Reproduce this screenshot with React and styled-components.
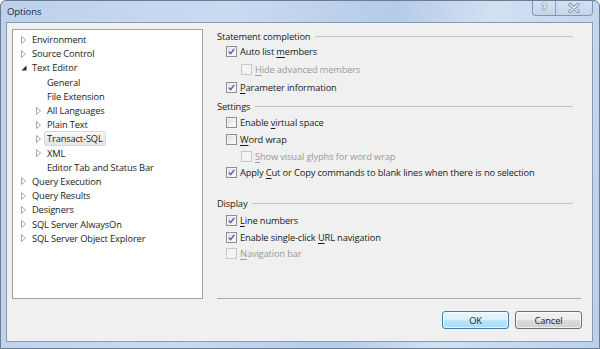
import React from 'react';
import styled, { createGlobalStyle } from 'styled-components';

const GlobalStyle = createGlobalStyle`
  html, body {
    margin: 0;
    padding: 0;
    background: #ffffff;
  }
  body {
    font-family: "Open Sans", "Noto Sans", sans-serif;
    font-size: 9.3px;
    letter-spacing: -0.14px;
    color: #1b1b1b;
  }
`;

const tree = [
  { label: 'Environment', level: 0, arrow: 'closed' },
  { label: 'Source Control', level: 0, arrow: 'closed' },
  { label: 'Text Editor', level: 0, arrow: 'open' },
  { label: 'General', level: 1 },
  { label: 'File Extension', level: 1 },
  { label: 'All Languages', level: 1, arrow: 'closed' },
  { label: 'Plain Text', level: 1, arrow: 'closed' },
  { label: 'Transact-SQL', level: 1, arrow: 'closed', selected: true },
  { label: 'XML', level: 1, arrow: 'closed' },
  { label: 'Editor Tab and Status Bar', level: 1 },
  { label: 'Query Execution', level: 0, arrow: 'closed' },
  { label: 'Query Results', level: 0, arrow: 'closed' },
  { label: 'Designers', level: 0, arrow: 'closed' },
  { label: 'SQL Server AlwaysOn', level: 0, arrow: 'closed' },
  { label: 'SQL Server Object Explorer', level: 0, arrow: 'closed' },
];

// label split into [before, mnemonic, after]
const sections = [
  {
    title: 'Statement completion',
    items: [
      { text: ['Auto list ', 'm', 'embers'], checked: true },
      { text: ['', 'H', 'ide advanced members'], disabled: true, indent: true, mt: 1 },
      { text: ['', 'P', 'arameter information'], checked: true, mt: 1 },
    ],
  },
  {
    title: 'Settings',
    mt: 3,
    items: [
      { text: ['Enable ', 'v', 'irtual space'], mt: 1 },
      { text: ['', 'W', 'ord wrap'] },
      { text: ['', 'S', 'how visual glyphs for word wrap'], disabled: true, indent: true },
      { text: ['Apply ', 'C', 'ut or Copy commands to blank lines when there is no selection'], checked: true, mt: -1 },
    ],
  },
  {
    title: 'Display',
    mt: 15,
    items: [
      { text: ['', 'L', 'ine numbers'], checked: true, mt: 2 },
      { text: ['Enable single-click ', 'U', 'RL navigation'], checked: true },
      { text: ['', 'N', 'avigation bar'], disabled: true, mt: -1 },
    ],
  },
];

const Arrow = ({ kind }) => {
  if (kind === 'open') {
    return (
      <svg width="6" height="6" viewBox="0 0 6 6">
        <path d="M5.5 0.5 L5.5 5.5 L0.5 5.5 Z" fill="#262626" />
      </svg>
    );
  }
  return (
    <svg width="5" height="8" viewBox="0 0 5 8">
      <path d="M0.5 0.5 L4.5 4 L0.5 7.5 Z" fill="#ffffff" stroke="#a6a6a6" strokeWidth="1" />
    </svg>
  );
};

const CheckBox = ({ checked, disabled }) => (
  <Box disabled={disabled}>
    {checked && (
      <svg width="9" height="9" viewBox="0 0 9 9">
        <path d="M1.8 4.6 L3.6 6.6 L7.2 1.8" fill="none" stroke="#4661a0" strokeWidth="1.4" />
      </svg>
    )}
  </Box>
);

const App = () => (
  <>
    <GlobalStyle />
    <Window>
      <TitleBar>
        <Title>Options</Title>
        <CaptionButtons>
          <HelpButton>?</HelpButton>
          <CloseButton>
            <svg width="12" height="10" viewBox="0 0 12 10">
              <path d="M2 1.5 L10 8.5 M10 1.5 L2 8.5" stroke="#7b8ba1" strokeWidth="3.2" strokeLinecap="round" />
              <path d="M2 1.5 L10 8.5 M10 1.5 L2 8.5" stroke="#f4f6f9" strokeWidth="1.5" strokeLinecap="round" />
            </svg>
          </CloseButton>
        </CaptionButtons>
      </TitleBar>
      <Client>
        <Body>
          <Tree>
            {tree.map((node) => (
              <TreeRow key={node.label} level={node.level}>
                <ArrowSlot>{node.arrow && <Arrow kind={node.arrow} />}</ArrowSlot>
                <TreeLabel selected={node.selected}>{node.label}</TreeLabel>
              </TreeRow>
            ))}
          </Tree>
          <RightColumn>
            <OptionsPanel>
              {sections.map((section) => (
                <Section key={section.title} mt={section.mt}>
                  <Heading>
                    <span>{section.title}</span>
                    <HeadingLine />
                  </Heading>
                  {section.items.map((item) => (
                    <CheckRow
                      key={item.text.join('')}
                      indent={item.indent}
                      mt={item.mt}
                      disabled={item.disabled}
                    >
                      <CheckBox checked={item.checked} disabled={item.disabled} />
                      <span>
                        {item.text[0]}
                        <u>{item.text[1]}</u>
                        {item.text[2]}
                      </span>
                    </CheckRow>
                  ))}
                </Section>
              ))}
            </OptionsPanel>
            <Separator />
          </RightColumn>
        </Body>
        <Footer>
          <Button primary>OK</Button>
          <Button>Cancel</Button>
        </Footer>
      </Client>
    </Window>
  </>
);

const Window = styled.div`
  width: 600px;
  height: 349px;
  box-sizing: border-box;
  display: flex;
  flex-direction: column;
  border: 1px solid #6d7c90;
  border-radius: 6px 6px 0 0;
  background: linear-gradient(100deg, #bcd1ec 0%, #c9dbf1 35%, #b5cbe8 60%, #d2e1f3 75%, #bad0ec 100%);
  overflow: hidden;
`;

const TitleBar = styled.div`
  height: 21px;
  flex-shrink: 0;
  display: flex;
  align-items: flex-start;
  justify-content: space-between;
  padding-left: 6px;
`;

const Title = styled.div`
  margin-top: 4px;
  font-size: 9.6px;
  color: #1e2a3a;
`;

const CaptionButtons = styled.div`
  display: flex;
  height: 15px;
  margin-top: -1px;
  margin-right: 6px;
  border: 1px solid #8495ac;
  border-top: none;
  border-radius: 0 0 4px 4px;
  background: linear-gradient(#d3e1f3, #c4d6ed);
  overflow: hidden;
`;

const HelpButton = styled.div`
  width: 22px;
  display: flex;
  align-items: center;
  justify-content: center;
  border-right: 1px solid #8d9db3;
  font-family: "DejaVu Sans", sans-serif;
  font-weight: bold;
  font-size: 10px;
  color: #f4f6f9;
  text-shadow: 0 0 1px #5f6f85, 0 0 1px #5f6f85, 0 0 1px #5f6f85;
`;

const CloseButton = styled.div`
  width: 36px;
  display: flex;
  align-items: center;
  justify-content: center;
`;

const Client = styled.div`
  flex: 1;
  display: flex;
  flex-direction: column;
  margin: 0 6px 6px 5px;
  border: 1px solid #8a9ab0;
  background: #f0f0f0;
`;

const Body = styled.div`
  display: flex;
  height: 270px;
  margin-top: 6px;
  padding-left: 5px;
  padding-right: 11px;
`;

const Tree = styled.div`
  width: 191px;
  box-sizing: border-box;
  border: 1px solid #a0a0a0;
  background: #ffffff;
  padding-top: 2.5px;
`;

const TreeRow = styled.div`
  height: 14.2px;
  display: flex;
  align-items: center;
  padding-left: ${(p) => 8 + p.level * 15}px;
  white-space: nowrap;
`;

const ArrowSlot = styled.div`
  width: 7px;
  display: flex;
  align-items: center;
  justify-content: flex-start;
  margin-right: 3px;
`;

const TreeLabel = styled.span`
  padding: 0 2px;
  margin-left: -2px;
  line-height: 13px;
  border: 1px solid ${(p) => (p.selected ? '#d9d9d9' : 'transparent')};
  border-radius: 2px;
  background: ${(p) => (p.selected ? 'linear-gradient(#f8f8f8, #e5e5e5)' : 'transparent')};
`;

const RightColumn = styled.div`
  flex: 1;
  display: flex;
  flex-direction: column;
  margin-left: 14px;
`;

const OptionsPanel = styled.div`
  flex: 1;
  padding-right: 8px;
`;

const Section = styled.div`
  margin-top: ${(p) => p.mt || 0}px;
`;

const Heading = styled.div`
  height: 14px;
  display: flex;
  align-items: center;
  gap: 5px;
  white-space: nowrap;
`;

const HeadingLine = styled.div`
  flex: 1;
  height: 1px;
  background: #c4c4c4;
  margin-top: 1px;
`;

const CheckRow = styled.div`
  height: 17px;
  display: flex;
  align-items: center;
  gap: 3px;
  margin-top: ${(p) => p.mt || 0}px;
  padding-left: ${(p) => (p.indent ? 24 : 9)}px;
  color: ${(p) => (p.disabled ? '#9a9a9a' : '#1b1b1b')};
  white-space: nowrap;

  u {
    text-underline-offset: 1.5px;
  }
`;

const Box = styled.div`
  width: 11px;
  height: 11px;
  box-sizing: border-box;
  flex-shrink: 0;
  display: flex;
  align-items: center;
  justify-content: center;
  border: 1px solid ${(p) => (p.disabled ? '#c8c8c8' : '#8e8f8f')};
  background: ${(p) =>
    p.disabled
      ? '#f4f4f4'
      : 'linear-gradient(135deg, #dcdcdc 0%, #eeeeee 50%, #ffffff 100%)'};
  box-shadow: inset 0 0 0 1px #f4f4f4;
`;

const Separator = styled.div`
  height: 1px;
  background: #a9a9a9;
`;

const Footer = styled.div`
  display: flex;
  justify-content: flex-end;
  gap: 6px;
  padding: 12px 10px 0 0;
`;

const Button = styled.div`
  width: 67px;
  height: 18px;
  box-sizing: border-box;
  display: flex;
  align-items: center;
  justify-content: center;
  border: 1px solid ${(p) => (p.primary ? '#3c7fb1' : '#707070')};
  border-radius: 3px;
  background: ${(p) =>
    p.primary
      ? 'linear-gradient(#eaf6fd 0%, #d9f0fc 50%, #bee6fd 51%, #a7d9f5 100%)'
      : 'linear-gradient(#f2f2f2 0%, #ebebeb 50%, #dddddd 51%, #cfcfcf 100%)'};
  box-shadow: inset 0 0 0 1px rgba(255, 255, 255, 0.65);
  color: #1b1b1b;
`;

export default App;
